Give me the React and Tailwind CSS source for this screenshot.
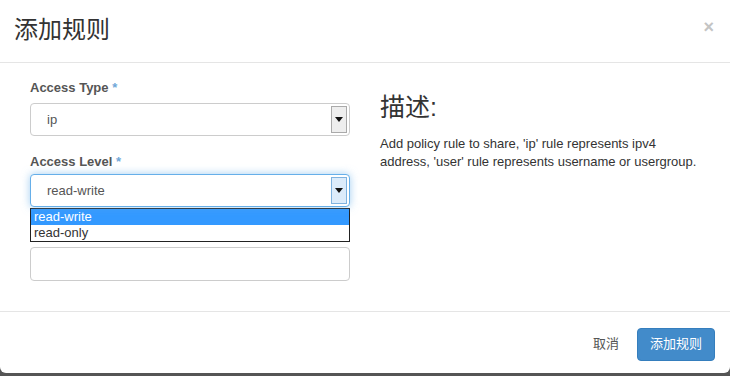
import React from 'react';

const font = { fontFamily: '"Liberation Sans", "Noto Sans CJK SC", sans-serif' };

function SelectBox({ value, focused }) {
  return (
    <div
      className={`relative h-[33px] rounded-[4px] border bg-white flex items-center ${
        focused ? 'border-[#66afe9] shadow-[0_0_8px_rgba(102,175,233,0.6)]' : 'border-[#ccc]'
      }`}
    >
      <span className="pl-[16px] text-[13px] text-[#555]">{value}</span>
      <div
        className={`absolute right-[2px] top-[2px] bottom-[2px] w-[16px] border flex items-center justify-center ${
          focused ? 'border-[#7fb3e0] bg-[#dcecfb]' : 'border-[#aaa] bg-[#eee]'
        }`}
      >
        <svg width="8" height="5" viewBox="0 0 8 5">
          <path d="M0 0h8L4 5z" fill="#111" />
        </svg>
      </div>
    </div>
  );
}

export default function App() {
  return (
    <div className="w-[730px] h-[376px] bg-[#555] overflow-hidden" style={font}>
      <div className="h-[373px] bg-white rounded-b-[6px] flex flex-col">
        <div className="h-[63px] border-b border-[#e5e5e5] flex items-start justify-between px-[14px] pt-[15px]">
          <h4 className="text-[24px] text-[#333] leading-[30px]">添加规则</h4>
          <span className="text-[18px] font-bold text-[#c4c4c4] leading-[18px] mt-[3px] mr-[2px]">×</span>
        </div>
        <div className="flex-1 flex px-[30px] pt-[16px]">
          <div className="w-[320px] shrink-0 flex flex-col">
            <label className="text-[13px] font-bold text-[#555] leading-[18px]">
              Access Type <span className="text-[#6fa7d8]">*</span>
            </label>
            <div className="mt-[6px]">
              <SelectBox value="ip" />
            </div>
            <label className="mt-[17px] text-[13px] font-bold text-[#555] leading-[18px]">
              Access Level <span className="text-[#6fa7d8]">*</span>
            </label>
            <div className="mt-[3px]">
              <SelectBox value="read-write" focused />
            </div>
            <div className="mt-[1px] border border-[#222] text-[13px] leading-[16px] bg-white">
              <div className="bg-[#3399ff] text-white pl-[3px]">read-write</div>
              <div className="text-[#333] pl-[3px]">read-only</div>
            </div>
            <div className="mt-[5px] h-[34px] rounded-[4px] border border-[#ccc] bg-white" />
          </div>
          <div className="ml-[30px] flex-1 pt-[13px]">
            <h3 className="text-[25px] text-[#333] leading-[30px]">描述:</h3>
            <p className="mt-[13px] text-[13px] text-[#333] leading-[18px] w-[320px]">
              Add policy rule to share, 'ip' rule represents ipv4 address, 'user' rule represents username or usergroup.
            </p>
          </div>
        </div>
        <div className="h-[62px] border-t border-[#e5e5e5] flex items-center justify-end px-[15px] gap-[18px] pt-[3px]">
          <span className="text-[13px] text-[#555]">取消</span>
          <button className="h-[33px] px-[12px] rounded-[4px] bg-[#428bca] border border-[#357ebd] text-white text-[13px]">
            添加规则
          </button>
        </div>
      </div>
    </div>
  );
}
